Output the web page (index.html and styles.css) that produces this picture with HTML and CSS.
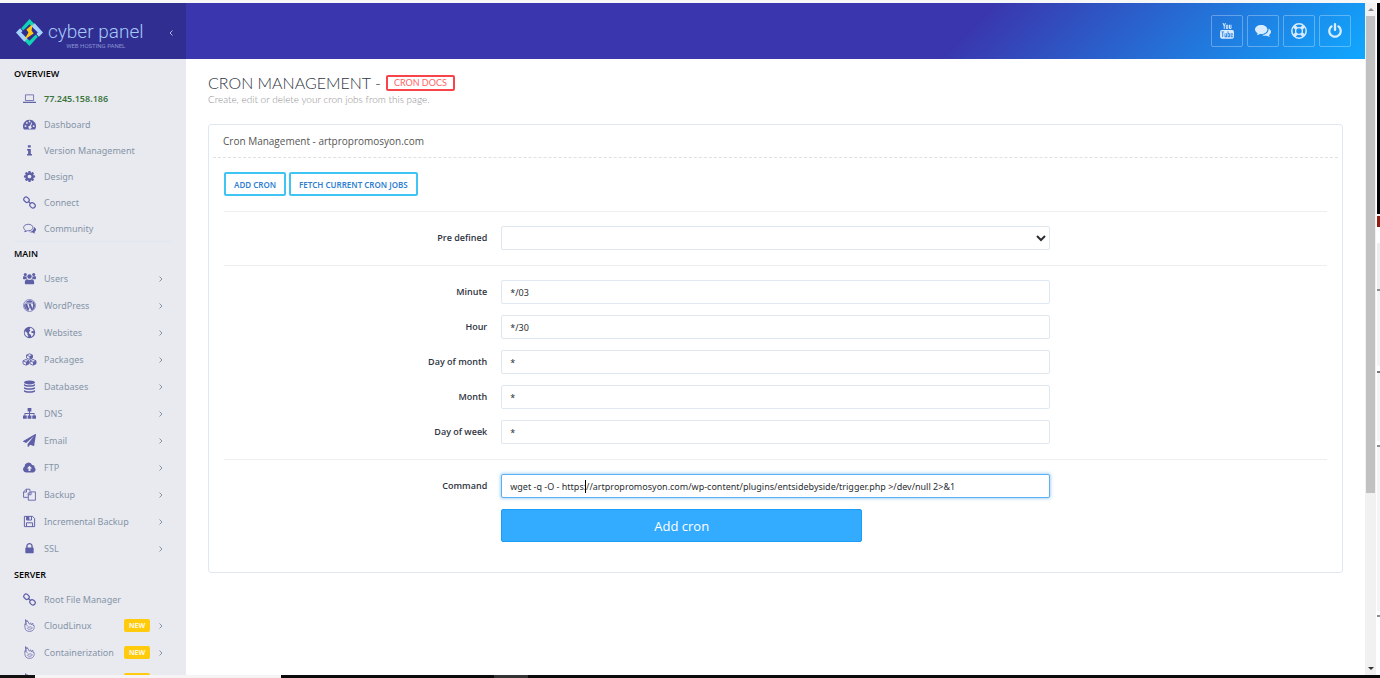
FILE: index.html
```html
<!DOCTYPE html>
<html lang="en">
<head>
    <meta charset="UTF-8">
    <meta name="viewport" content="width=device-width, initial-scale=1.0">
    <title>Cron Management - CyberPanel</title>
    <link rel="stylesheet" href="styles.css">
</head>
<body>
    <svg class="sprite" aria-hidden="true">
        <symbol id="laptop" viewBox="0 0 16 16"><path d="M3 3.500h10v7H3z" fill="none" stroke="currentColor"/><path d="M0 12h16v1.500H0z"/></symbol>
        <symbol id="gauge" viewBox="0 0 16 16"><path fill-rule="evenodd" d="M8 2a8 8 0 0 0-6.800 12.200h13.600A8 8 0 0 0 8 2zM2 10a1.100 1.100 0 1 0 2.200 0A1.100 1.100 0 1 0 2 10zm1.700-4a1.100 1.100 0 1 0 2.200 0 1.100 1.100 0 1 0-2.200 0zM7 4.300a1.100 1.100 0 1 0 2.200 0 1.100 1.100 0 1 0-2.200 0zm5 5.700a1.100 1.100 0 1 0 2.200 0A1.100 1.100 0 1 0 12 10zm-1.800-4.500L8.700 9.600a1.900 1.900 0 1 0 1.100.4l1.500-4.200z"/></symbol>
        <symbol id="info" viewBox="0 0 16 16"><path d="M6 1.500h3.500v2.800H6zM5 6h4.600v6.200H11v2H5v-2h1.300V8H5z"/></symbol>
        <symbol id="cog" viewBox="0 0 1792 1792"><path d="M1152 896q0-106-75-181t-181-75-181 75-75 181 75 181 181 75 181-75 75-181zm512-109v222q0 12-8 23t-20 13l-185 28q-19 54-39 91 35 50 107 138 10 12 10 25t-9 23q-27 37-99 108t-94 71q-12 0-26-9l-138-108q-44 23-91 38-16 136-29 186-7 28-36 28h-222q-14 0-24.500-8.500t-11.500-21.500l-28-184q-49-16-90-37l-141 107q-10 9-25 9-14 0-25-11-126-114-165-168-7-10-7-23 0-12 8-23 15-21 51-66.500t54-70.500q-27-50-41-99l-183-27q-13-2-21-12.500t-8-23.500v-222q0-12 8-23t19-13l186-28q14-46 39-92-40-57-107-138-10-12-10-24 0-10 9-23 26-36 98.500-107.500t94.500-71.500q13 0 26 10l138 107q44-23 91-38 16-136 29-186 7-28 36-28h222q14 0 24.500 8.500t11.500 21.500l28 184q49 16 90 37l142-107q9-9 24-9 13 0 25 10 129 119 165 170 7 8 7 22 0 12-8 23-15 21-51 66.500t-54 70.500q26 50 41 98l183 28q13 2 21 12.500t8 23.500z"/></symbol>
        <symbol id="link" viewBox="0 0 16 16"><g fill="none" stroke="currentColor" stroke-width="1.500"><rect x="0.800" y="1.800" width="7" height="5.600" rx="2.800" transform="rotate(42 4.300 4.600)"/><rect x="8.200" y="8.700" width="7" height="5.600" rx="2.800" transform="rotate(42 11.700 11.500)"/><path d="M6.200 6.400l3.700 3.300"/></g></symbol>
        <symbol id="chat" viewBox="0 0 16 16"><path d="M6.500 2.800c3.200 0 5.700 1.700 5.700 4s-2.500 4-5.700 4l-1.300-.1c-1 .8-2 1.100-3.200 1.200.6-.6.900-1.200 1-1.900C1.700 9.300.8 8.100.8 6.800c0-2.300 2.500-4 5.700-4z" fill="none" stroke="currentColor" stroke-width="1.100"/><path d="M13.400 6c1.600.8 2.600 1.900 2.600 3.300 0 1.300-.8 2.300-2 3 .2.700.6 1.200 1.200 1.900-1.400 0-2.400-.5-3.400-1.300-1.700.3-3.400 0-4.800-.8 3.600 0 6.700-2 6.400-6.100z"/></symbol>
        <symbol id="chats" viewBox="0 0 16 16"><path d="M6.200 2C9.600 2 12.400 3.900 12.400 6.500S9.600 11 6.200 11l-1.300-.1c-1 .7-2.100 1-3.300 1.100.6-.5 1-1.100 1.100-1.800C1.100 9.300 0 8 0 6.500 0 3.900 2.800 2 6.200 2z"/><path d="M13.600 5.400C15 6.200 16 7.400 16 8.800c0 1.300-.8 2.500-2 3.200.1.700.5 1.200 1.100 1.800-1.300-.1-2.300-.4-3.200-1.100-1.700.3-3.500 0-4.900-.8 4-.2 6.900-2.700 6.600-6.500z"/></symbol>
        <symbol id="users" viewBox="0 0 16 16"><circle cx="8" cy="5.500" r="2.700"/><circle cx="2.800" cy="3" r="1.900"/><circle cx="13.200" cy="3" r="1.900"/><path d="M3.500 15c-.8 0-1.300-.6-1.300-1.600 0-2.500.9-4.600 2.900-4.600 1.900 1.300 3.900 1.300 5.800 0 2 0 2.900 2.100 2.900 4.600 0 1-.5 1.600-1.300 1.600zM0 7.500c0-1.500.4-2.500 1.300-2.500 1 .7 2 .7 3 .3 0 1 .2 1.900.8 2.700-.9 0-1.700.4-2.200 1H1C.4 9 0 8.500 0 7.500zM16 7.500C16 6 15.600 5 14.700 5c-1 .7-2 .7-3 .3 0 1-.2 1.900-.8 2.700.9 0 1.700.4 2.200 1H15c.6 0 1-.5 1-1.500z"/></symbol>
        <symbol id="wordpress" viewBox="0 0 16 16"><circle cx="8" cy="8" r="7.400" fill="none" stroke="currentColor" stroke-width=".8"/><path d="M2 5.500h4v.6L5.200 6.200l1.900 5.400.8-2.500-1-2.900-.7-.1v-.6h4.400v.6l-1 .1 1.900 5.500.8-2.700c.5-1.600.1-2.300-.5-3.300-.6-1-.4-2.300.8-2.500a6.500 6.500 0 0 1 .5 9.200 6.500 6.500 0 0 1-2.600 1.800L8.300 9.700l-1.600 4.700a6.500 6.500 0 0 1-1.400-.4L2.100 5.500zM1.900 5.800l3 8A6.500 6.500 0 0 1 1.900 5.800zM2.900 4.200A6.500 6.500 0 0 1 12 3L10 4.500z"/></symbol>
        <symbol id="globe" viewBox="0 0 16 16"><path fill-rule="evenodd" d="M8 1a7 7 0 1 0 0 14A7 7 0 0 0 8 1zM9 2.200l2.300.8 1.800 2.200-.6 1.300-1.500-.3-1 1.100.9 1.200 1.800.2.300 1.600-1.500 2-1 .9-1.200-2.600-2-1.300.2-1.900L9 5.900 8 4.600l.4-1zM2.300 6.600L4 7.300l1.500 1.600-.2 1.500L6.500 12l-.3 1.500a6 6 0 0 1-3.900-6.900z"/></symbol>
        <symbol id="cubes" viewBox="0 0 18 16"><g fill="none" stroke="currentColor" stroke-width="1.100" stroke-linejoin="round"><path d="M9 1l3.600 1.500v3.700L9 8 5.400 6.200V2.500zM5.400 2.700L9 4.200l3.600-1.500M4.700 8l3.700 1.600v3.700L4.700 15 1 13.300V9.600zM1 9.800l3.700 1.500 3.700-1.500M13.300 8L17 9.600v3.700L13.300 15l-3.700-1.700V9.600zM9.600 9.800l3.700 1.500L17 9.800"/></g><path d="M9 4.300l3.600-1.500v3.400L9 8zM4.700 11.400l3.700-1.600v3.500L4.700 15zM13.300 11.400L17 9.800v3.500L13.300 15z"/></symbol>
        <symbol id="database" viewBox="0 0 16 16"><ellipse cx="8" cy="3" rx="6.800" ry="2.500"/><path d="M1.200 5c2 2 11.600 2 13.600 0v1.700c-1 2.200-12.600 2.200-13.600 0zM1.200 8.700c2 2 11.600 2 13.600 0v1.700c-1 2.200-12.600 2.200-13.600 0zM1.200 12.300c2 2 11.600 2 13.600 0V14c-1 2.300-12.600 2.300-13.600 0z"/></symbol>
        <symbol id="sitemap" viewBox="0 0 16 16"><path d="M5.700 1.300h4.600v4.200H8.600v2h5.600v3H16v4h-4.600v-4h1.700V8.600H8.600v1.900h1.700v4H5.700v-4h1.700V8.600H2.900v1.900h1.700v4H0v-4h1.800v-3h5.600v-2H5.700z"/></symbol>
        <symbol id="plane" viewBox="0 0 1792 1792"><path d="M1764 11q33 24 27 64l-256 1536q-5 29-32 45-14 8-31 8-11 0-24-5l-453-185-242 295q-18 23-49 23-13 0-22-4-19-7-30.500-23.500t-11.500-36.500v-349l864-1059-1069 925-395-162q-37-14-40-55-2-40 32-59l1664-960q15-9 32-9 20 0 36 11z"/></symbol>
        <symbol id="cloud" viewBox="0 0 16 16"><path fill-rule="evenodd" d="M3.800 14A3.900 3.900 0 0 1 2 6.700a4.800 4.800 0 0 1 9.300-1.600 2.400 2.400 0 0 1 2.900 3A3.300 3.300 0 0 1 12.800 14zM8 5.800L4.800 9.200h2v3h2.400v-3h2z"/></symbol>
        <symbol id="copy" viewBox="0 0 16 16"><path d="M6 11.500H.7V4.700L4 1.500h4.500v3M4.300 1.500V5H.7M6.500 15V8l3-3.200h5.800V15zM9.900 4.800v3.500H6.500M8.500 4.500L5.500 7.700" fill="none" stroke="currentColor" stroke-width="1.100"/></symbol>
        <symbol id="save" viewBox="0 0 16 16"><path d="M1.700 1.700h10l2.600 2.600v10H1.700zM4.300 14V9.600h7.500V14M4.500 1.700v4.500h6V1.700" fill="none" stroke="currentColor" stroke-width="1.200"/><path d="M4.500 2h3.300v4H4.500z"/></symbol>
        <symbol id="lock" viewBox="0 0 1792 1792"><path d="M640 768h512v-192q0-106-75-181t-181-75-181 75-75 181v192zm832 96v576q0 40-28 68t-68 28h-960q-40 0-68-28t-28-68v-576q0-40 28-68t68-28h32v-192q0-184 132-316t316-132 316 132 132 316v192h32q40 0 68 28t28 68z"/></symbol>
        <symbol id="flame" viewBox="0 0 16 16"><path d="M3.200.8L5 3.500l.4-1.500 2.300 4.300 1.900-1.600.3 2.400 2.300-1.900-.1 2.400 1.600.4c.5 4-.9 7-5.300 7.200-4 .2-5.900-1.700-6-5.200L2.200 6l1.500.6z" fill="none" stroke="currentColor" stroke-width=".9"/><path d="M3.200.8l.5 5.800 2.500 2.600M5.400 11.500c1-2.200 5-2.400 6.200-.5M5.400 11.500c1.600 1.700 4.300 1.600 6.200-.5" fill="none" stroke="currentColor" stroke-width=".8"/></symbol>
        <symbol id="youtube" viewBox="0 0 16 18"><path d="M3.500 0l1.400 3.500v3M6.300 0L4.900 3.500M7.200 2.500h1.700v3.700H7.200zM10.800 2v4.200h1.700V2" fill="none" stroke="currentColor" stroke-width="1.100"/><path fill-rule="evenodd" d="M2 7.800h12q1.800.1 1.800 2v5.700q0 2-1.800 2.100H2Q.2 17.500.2 15.500V9.800q0-1.900 1.800-2zm-.3 1.700v1h1v5.300h1v-5.300h1v-1zm3.600 1.900v4.500h2.600v-4.500H7V15h-.8v-3.600zm3.400-2v6.500h2.500v-4.500H9.600v-2zm.9 3h.7V15h-.7zm2.500-1v4.500h2.300v-1.600h-.8v.8H13v-1.200h1.400v-2.500zm.9.800h.7v1H13z"/></symbol>
        <symbol id="ring" viewBox="0 0 16 16"><g fill="none" stroke="currentColor"><circle cx="8" cy="8" r="7.200" stroke-width="1.500"/><circle cx="8" cy="8" r="3.400" stroke-width="1.300"/><path d="M3.200 3.200l2.300 2.300M12.800 3.200l-2.300 2.300M3.200 12.800l2.300-2.300M12.800 12.800l-2.300-2.300" stroke-width="3.200"/></g></symbol>
        <symbol id="power" viewBox="0 0 1792 1792"><path d="M1664 896q0 156-61 298t-164 245-245 164-298 61-298-61-245-164-164-245-61-298q0-182 80.500-343t226.500-270q43-32 95.500-25t83.500 50q32 42 24.500 94.500t-49.500 84.500q-98 74-151.500 181t-53.500 228q0 104 40.500 198.500t109.500 163.500 163.500 109.500 198.500 40.500 198.500-40.500 163.500-109.500 109.500-163.500 40.500-198.500q0-121-53.500-228t-151.500-181q-42-32-49.500-84.500t24.500-94.500q31-43 84-50t95 25q146 109 226.500 270t80.500 343zm-640-768v640q0 52-38 90t-90 38-90-38-38-90v-640q0-52 38-90t90-38 90 38 38 90z"/></symbol>
        <symbol id="chevron" viewBox="0 0 8 8"><path d="M2.500 1.500L5 4 2.500 6.500" fill="none" stroke="currentColor"/></symbol>
    </svg>

    <div class="desktop">
        <div class="window">
            <div class="page">
                <header class="header">
                    <div class="brand">
                        <svg class="brand-mark" viewBox="0 0 26 26" aria-hidden="true">
                            <path d="M13 0l5 5-9 8-4-4z" fill="#12d3b5"/>
                            <path d="M18 4l8 9-4 4-8-9z" fill="#a5d3ff"/>
                            <path d="M13 26l-5-5 9-8 4 4z" fill="#12d3b5"/>
                            <path d="M8 22l-8-9 4-4 8 9z" fill="#a5d3ff"/>
                            <path d="M13 5l8 8-8 8-8-8z" fill="#2f2d8e"/>
                            <path d="M16 5l-6 5 2 3-4 7 9-6-2-3z" fill="#ffc914"/>
                        </svg>
                        <div class="brand-text">
                            <span class="brand-name">cyber panel</span>
                            <span class="brand-tag">WEB HOSTING PANEL</span>
                        </div>
                        <button class="collapse" type="button" aria-label="Close sidebar"><svg class="chevron flip"><use href="#chevron"/></svg></button>
                    </div>
                    <div class="header-actions">
                        <a class="action" href="#" aria-label="YouTube"><svg class="action-icon"><use href="#youtube"/></svg></a>
                        <a class="action" href="#" aria-label="Forums"><svg class="action-icon"><use href="#chats"/></svg></a>
                        <a class="action" href="#" aria-label="Support"><svg class="action-icon"><use href="#ring"/></svg></a>
                        <a class="action" href="#" aria-label="Logout"><svg class="action-icon"><use href="#power"/></svg></a>
                    </div>
                </header>

                <div class="body">
                    <nav class="sidebar">
                        <section class="menu">
                            <h3 class="menu-title">Overview</h3>
                            <ul class="menu-list">
                                <li><a class="item server-ip" href="#"><svg class="icon"><use href="#laptop"/></svg>77.245.158.186</a></li>
                                <li><a class="item" href="#"><svg class="icon"><use href="#gauge"/></svg>Dashboard</a></li>
                                <li><a class="item" href="#"><svg class="icon"><use href="#info"/></svg>Version Management</a></li>
                                <li><a class="item" href="#"><svg class="icon"><use href="#cog"/></svg>Design</a></li>
                                <li><a class="item" href="#"><svg class="icon"><use href="#link"/></svg>Connect</a></li>
                                <li><a class="item" href="#"><svg class="icon"><use href="#chat"/></svg>Community</a></li>
                            </ul>
                        </section>
                        <section class="menu divided">
                            <h3 class="menu-title">Main</h3>
                            <ul class="menu-list">
                                <li><a class="item parent" href="#"><svg class="icon"><use href="#users"/></svg>Users<svg class="chevron"><use href="#chevron"/></svg></a></li>
                                <li><a class="item parent" href="#"><svg class="icon"><use href="#wordpress"/></svg>WordPress<svg class="chevron"><use href="#chevron"/></svg></a></li>
                                <li><a class="item parent" href="#"><svg class="icon"><use href="#globe"/></svg>Websites<svg class="chevron"><use href="#chevron"/></svg></a></li>
                                <li><a class="item parent" href="#"><svg class="icon"><use href="#cubes"/></svg>Packages<svg class="chevron"><use href="#chevron"/></svg></a></li>
                                <li><a class="item parent" href="#"><svg class="icon"><use href="#database"/></svg>Databases<svg class="chevron"><use href="#chevron"/></svg></a></li>
                                <li><a class="item parent" href="#"><svg class="icon"><use href="#sitemap"/></svg>DNS<svg class="chevron"><use href="#chevron"/></svg></a></li>
                                <li><a class="item parent" href="#"><svg class="icon"><use href="#plane"/></svg>Email<svg class="chevron"><use href="#chevron"/></svg></a></li>
                                <li><a class="item parent" href="#"><svg class="icon"><use href="#cloud"/></svg>FTP<svg class="chevron"><use href="#chevron"/></svg></a></li>
                                <li><a class="item parent" href="#"><svg class="icon"><use href="#copy"/></svg>Backup<svg class="chevron"><use href="#chevron"/></svg></a></li>
                                <li><a class="item parent" href="#"><svg class="icon"><use href="#save"/></svg>Incremental Backup<svg class="chevron"><use href="#chevron"/></svg></a></li>
                                <li><a class="item parent" href="#"><svg class="icon"><use href="#lock"/></svg>SSL<svg class="chevron"><use href="#chevron"/></svg></a></li>
                            </ul>
                        </section>
                        <section class="menu">
                            <h3 class="menu-title">Server</h3>
                            <ul class="menu-list">
                                <li><a class="item" href="#"><svg class="icon"><use href="#link"/></svg>Root File Manager</a></li>
                                <li><a class="item parent" href="#"><svg class="icon"><use href="#flame"/></svg>CloudLinux<span class="badge">NEW</span><svg class="chevron"><use href="#chevron"/></svg></a></li>
                                <li><a class="item parent" href="#"><svg class="icon"><use href="#flame"/></svg>Containerization<span class="badge">NEW</span><svg class="chevron"><use href="#chevron"/></svg></a></li>
                                <li><a class="item parent" href="#"><svg class="icon"><use href="#flame"/></svg><span class="badge"></span><svg class="chevron"><use href="#chevron"/></svg></a></li>
                            </ul>
                        </section>
                    </nav>

                    <main class="content">
                        <h2 class="title">CRON MANAGEMENT - <a class="docs" href="#">CRON DOCS</a></h2>
                        <p class="subtitle">Create, edit or delete your cron jobs from this page.</p>

                        <div class="panel">
                            <h3 class="panel-title">Cron Management - artpropromosyon.com</h3>
                            <form class="cron-form">
                                <div class="toolbar">
                                    <button class="btn-outline" type="button">ADD CRON</button>
                                    <button class="btn-outline" type="button">FETCH CURRENT CRON JOBS</button>
                                </div>
                                <hr class="rule">
                                <div class="fields">
                                    <label class="label" for="predefined">Pre defined</label>
                                    <select class="control" id="predefined"><option></option></select>
                                </div>
                                <hr class="rule">
                                <div class="fields">
                                    <label class="label" for="minute">Minute</label>
                                    <input class="control" id="minute" type="text" value="*/03">
                                    <label class="label" for="hour">Hour</label>
                                    <input class="control" id="hour" type="text" value="*/30">
                                    <label class="label" for="monthday">Day of month</label>
                                    <input class="control" id="monthday" type="text" value="*">
                                    <label class="label" for="month">Month</label>
                                    <input class="control" id="month" type="text" value="*">
                                    <label class="label" for="weekday">Day of week</label>
                                    <input class="control" id="weekday" type="text" value="*">
                                </div>
                                <hr class="rule">
                                <div class="fields">
                                    <label class="label" for="command">Command</label>
                                    <div class="command">
                                        <input class="control focused" id="command" type="text" value="wget -q -O - https://artpropromosyon.com/wp-content/plugins/entsidebyside/trigger.php &gt;/dev/null 2&gt;&amp;1">
                                        <span class="caret"></span>
                                    </div>
                                    <button class="btn-submit" type="button">Add cron</button>
                                </div>
                            </form>
                        </div>
                    </main>
                </div>
            </div>
            <div class="scrollbar">
                <span class="arrow arrow-up"></span>
                <span class="thumb"></span>
                <span class="arrow arrow-down"></span>
            </div>
            <div class="behind"></div>
        </div>
        <div class="taskbar"></div>
    </div>
</body>
</html>
```
FILE: styles.css
```css
:root {
    --brand: #3a36ad;
    --brand-dark: #302e90;
    --accent: #33abff;
    --sidebar-bg: #e9eaf0;
    --icon: #5f5fa8;
    --border: #dfe8f1;
    --text: #2f3542;
    --muted: #8494a6;
}

* {
    margin: 0;
    padding: 0;
    box-sizing: border-box;
}

body {
    font-family: 'Open Sans', 'Noto Sans', sans-serif;
    font-size: 10px;
    color: var(--text);
    background: #fff;
}

a {
    color: inherit;
    text-decoration: none;
}

ul {
    list-style: none;
}

svg {
    fill: currentColor;
    flex: none;
}

.sprite {
    display: none;
}

/* Window frame */
.desktop {
    height: 100vh;
    display: flex;
    flex-direction: column;
    border-top: 3px solid #f7f7f7;
}

.window {
    flex: 1;
    min-height: 0;
    display: flex;
}

.page {
    flex: 1;
    min-width: 0;
    display: flex;
    flex-direction: column;
    overflow: hidden;
}

.scrollbar {
    width: 11px;
    display: flex;
    flex-direction: column;
    background: #f1f1f1;
}

.arrow {
    height: 13px;
    display: flex;
    align-items: center;
    justify-content: center;
}

.arrow::before {
    content: "";
    border: 3px solid transparent;
}

.arrow-up::before {
    border-top: 0;
    border-bottom-color: #858585;
}

.arrow-down::before {
    border-bottom: 0;
    border-top-color: #333;
}

.thumb {
    height: 71%;
    margin: 0 1px;
    background: #c1c1c1;
}

.arrow-down {
    margin-top: auto;
}

.behind {
    width: 4px;
    border-left: 1px solid #fff;
    background: linear-gradient(#000 211px, #f4f4f4 211px 213px, #8f1d12 213px 224px, #fff 224px 240px, #eee 240px 286px, #8c8f98 286px 288px, #f4f4f4 288px 363px, #fff 363px 368px, #777 368px 370px, #f4f4f4 370px 438px, #fff 438px 442px, #8c8f98 442px 444px, #f4f4f4 444px 608px, #fff 608px 612px, #8c8f98 612px 614px, #fff 614px);
}

.taskbar {
    height: 3px;
    background: linear-gradient(90deg, #111 35px, #f5f3f3 35px 281px, #0a0a0a 281px 494px, #333 494px 528px, #0a0a0a 528px);
}

/* Header */
.header {
    display: flex;
    height: 56px;
    flex: none;
    background: linear-gradient(135deg, var(--brand) 70%, #10a8ff);
    color: #d9ecff;
}

.brand {
    width: 186px;
    display: flex;
    align-items: center;
    padding: 2px 8px 0 16px;
    gap: 5px;
    background: var(--brand-dark);
}

.brand-mark {
    width: 27px;
    height: 27px;
}

.brand-text {
    display: flex;
    flex-direction: column;
    align-items: center;
    padding-top: 5px;
    font-family: Roboto, sans-serif;
}

.brand-name {
    font-size: 19px;
    font-weight: 300;
    line-height: 22px;
    color: #a5c8f8;
    white-space: nowrap;
}

.brand-tag {
    font-size: 6px;
    line-height: 6px;
    color: #8a92d0;
}

.collapse {
    margin-left: auto;
    width: 15px;
    height: 20px;
    border: 0;
    background: none;
    color: #a9b4e6;
    cursor: pointer;
}

.header-actions {
    margin-left: auto;
    display: flex;
    align-items: center;
    gap: 4px;
    padding-right: 14px;
}

.action {
    width: 32px;
    height: 32px;
    display: flex;
    align-items: center;
    justify-content: center;
    border: 1px solid rgba(255, 255, 255, 0.3);
    border-radius: 2px;
}

.action:hover {
    background: rgba(255, 255, 255, 0.15);
}

.action-icon {
    width: 16px;
    height: 16px;
}

/* Sidebar */
.body {
    flex: 1;
    min-height: 0;
    display: flex;
}

.sidebar {
    width: 186px;
    flex: none;
    padding: 6px 14px 0;
    background: var(--sidebar-bg);
    font-family: 'Noto Sans', sans-serif;
    overflow: hidden;
}

.menu + .menu {
    border-top: 1px solid transparent;
    padding-top: 3px;
}

.menu.divided {
    border-top-color: var(--border);
}

.menu-title {
    margin-bottom: 2px;
    font-family: 'Open Sans', sans-serif;
    font-size: 9px;
    font-weight: 600;
    line-height: 18px;
    color: #000;
    text-transform: uppercase;
}

.item {
    height: 26px;
    display: flex;
    align-items: center;
    gap: 7px;
    padding: 0 7px 0 8px;
    color: var(--muted);
    font-size: 9px;
}

.item.parent {
    height: 27px;
}

.item:hover {
    color: var(--brand);
}

.server-ip {
    color: #3c763d;
    font-weight: 600;
}

.icon {
    width: 15px;
    height: 13px;
    color: var(--icon);
}

.chevron {
    width: 8px;
    height: 8px;
    margin-left: auto;
}

.flip {
    transform: rotate(180deg);
}

.badge {
    flex: none;
    width: 26px;
    height: 13px;
    margin-left: auto;
    border-radius: 2px;
    background: #ffcb0c;
    color: #fff;
    font-size: 7px;
    font-weight: 600;
    line-height: 13px;
    text-align: center;
}

.badge + .chevron {
    margin-left: 0;
}

/* Content */
.content {
    flex: 1;
    min-width: 0;
    padding: 14px 22px;
}

.title {
    display: flex;
    align-items: center;
    gap: 5px;
    font-family: Lato, sans-serif;
    font-size: 16px;
    font-weight: 300;
    line-height: 20px;
}

.docs {
    height: 16px;
    padding: 0 6px;
    border: 2px solid #f9434a;
    border-radius: 2px;
    color: #ff6464;
    font-size: 9px;
    font-weight: 400;
    line-height: 12px;
}

.subtitle {
    font-family: Lato, sans-serif;
    font-size: 10px;
    font-weight: 300;
    line-height: 12px;
    color: #909090;
}

.panel {
    margin-top: 19px;
    padding: 0 4px 30px;
    border: 1px solid var(--border);
    border-radius: 3px;
}

.panel-title {
    padding: 0 10px;
    border-bottom: 1px dashed #e0e0e0;
    font-size: 10px;
    font-weight: 400;
    line-height: 32px;
    color: #555;
}

.cron-form {
    padding: 14px 7px 0;
}

.toolbar {
    display: flex;
    gap: 3px;
    padding: 0 4px;
}

.btn-outline {
    height: 24px;
    padding: 0 8px;
    border: 2px solid #40c4f4;
    border-radius: 2px;
    background: #fff;
    color: #2f7fd2;
    font-family: 'Noto Sans', sans-serif;
    font-size: 8px;
    font-weight: 600;
    cursor: pointer;
}

.btn-outline:hover {
    background: #eefaff;
}

.rule {
    margin: 15px 4px 14px;
    border: 0;
    border-top: 1px solid #eee;
}

.fields {
    display: grid;
    grid-template-columns: repeat(12, 1fr);
    gap: 11px 14px;
}

.label {
    grid-column: 1 / span 3;
    text-align: right;
    font-size: 9px;
    font-weight: 600;
    line-height: 23px;
}

.control {
    grid-column: 4 / span 6;
    width: 100%;
    height: 24px;
    padding: 0 8px;
    border: 1px solid var(--border);
    border-radius: 2px;
    background: #fff;
    color: #2b2f33;
    font-family: 'Noto Sans', sans-serif;
    font-size: 9px;
}

select.control {
    padding: 0;
}

.control:focus,
.control.focused {
    outline: none;
    border-color: #58b0f5;
    box-shadow: 0 0 3px 1px rgba(102, 175, 233, 0.5);
}

.command {
    grid-column: 4 / span 6;
    position: relative;
    display: flex;
}

.caret {
    position: absolute;
    top: 6px;
    left: 84px;
    width: 1px;
    height: 13px;
    background: #000;
}

.btn-submit {
    grid-column: 4 / span 4;
    height: 33px;
    border: 1px solid #1a9cf8;
    border-radius: 2px;
    background: var(--accent);
    color: #fff;
    font-family: inherit;
    font-size: 13px;
    cursor: pointer;
}

.btn-submit:hover {
    background: #1a9cf8;
}
```
